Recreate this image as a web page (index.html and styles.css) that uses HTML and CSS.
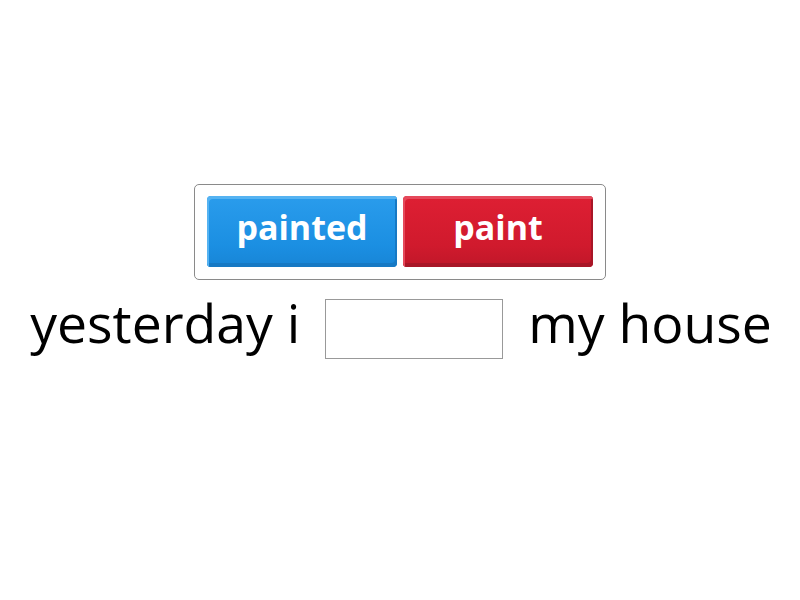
FILE: index.html
```html
<!DOCTYPE html>
<html lang="en">

<head>
  <meta charset="UTF-8">
  <meta name="viewport" content="width=device-width, initial-scale=1.0">
  <title>Fill the gap</title>
  <link rel="stylesheet" href="styles.css">
</head>

<body>
  <main class="activity">
    <!-- Answer options -->
    <div class="options">
      <button class="tile tile-blue">painted</button>
      <button class="tile tile-red">paint</button>
    </div>

    <!-- Sentence with blank -->
    <p class="sentence">
      <span class="words">yesterday i</span>
      <span class="blank"></span>
      <span class="words">my house</span>
    </p>
  </main>
</body>

</html>
```

FILE: styles.css
```css
body {
  margin: 0;
  background: #fff;
  font-family: "Open Sans", "DejaVu Sans", sans-serif;
  color: #000;
}

/* Styling for the whole activity */
.activity {
  display: flex;
  flex-direction: column;
  align-items: center;
  padding-top: 184px;
}

/* Styling for the options box */
.options {
  display: flex;
  gap: 6px;
  padding: 11px 12px 12px;
  border: 1px solid #8a8a8a;
  border-radius: 5px;
}

/* Styling for option tiles */
.tile {
  width: 190px;
  height: 71px;
  border: none;
  border-radius: 4px;
  font-family: "Open Sans", sans-serif;
  font-weight: bold;
  font-size: 34px;
  color: #fff;
  padding: 0 0 9px;
}

.tile-blue {
  background: linear-gradient(#2a9cec, #1b8fe2 70%, #1885d6);
  box-shadow: inset 2px 3px 0 #55b3f2, inset -2px -4px 0 #1679c4;
}

.tile-red {
  background: linear-gradient(#de1f33, #d01a2d 70%, #c01729);
  box-shadow: inset 2px 3px 0 #e5495b, inset -2px -4px 0 #a81627;
}

/* Styling for the sentence */
.sentence {
  display: flex;
  align-items: center;
  gap: 25px;
  margin: 12px 0 0 2px;
  font-size: 53.5px;
  line-height: 62px;
}

.words {
  padding-bottom: 12px;
}

.blank {
  width: 176px;
  height: 58px;
  border: 1px solid #999;
}
```
